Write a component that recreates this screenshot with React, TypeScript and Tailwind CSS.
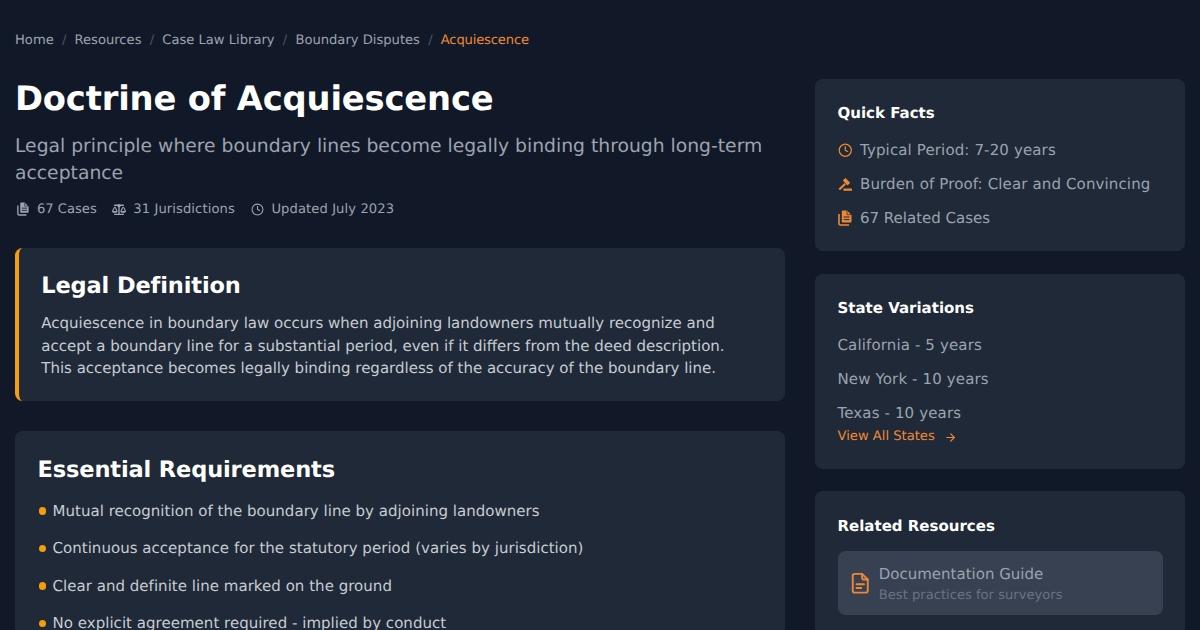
import { LuClock, LuArrowRight } from 'react-icons/lu';
import { FaBalanceScale } from 'react-icons/fa';

const crumbs = ['Home', 'Resources', 'Case Law Library', 'Boundary Disputes'];

const requirements = [
  'Mutual recognition of the boundary line by adjoining landowners',
  'Continuous acceptance for the statutory period (varies by jurisdiction)',
  'Clear and definite line marked on the ground',
  'No explicit agreement required - implied by conduct',
];

const states = ['California - 5 years', 'New York - 10 years', 'Texas - 10 years'];

// stacked sheets, solid front page with two cut-out lines
function CasesIcon({ className, cut }: { className?: string; cut: string }) {
  return (
    <svg viewBox="0 0 14 16" className={className} fill="none">
      <path d="M1 4.5V13.5a1.5 1.5 0 0 0 1.5 1.5H10.5" stroke="currentColor" strokeWidth="1.6" strokeLinecap="round" />
      <path d="M4.8 0.5H9L13.5 5V11.5a1 1 0 0 1-1 1H4.8a1 1 0 0 1-1-1V1.5a1 1 0 0 1 1-1Z" fill="currentColor" />
      <path d="M5.6 7H11.6M5.6 9.6H11.6" stroke={cut} strokeWidth="1" />
      <path d="M9 0.8V4.6H13.2" stroke={cut} strokeWidth="0.7" />
    </svg>
  );
}

function GavelIcon({ className }: { className?: string }) {
  return (
    <svg viewBox="0 0 14 13" className={className} fill="currentColor">
      <path d="M7.4 0 12.2 4.8 9.6 7.4 4.8 2.6Z" />
      <path d="M6.6 5 8 6.4 1.9 12.2 0.5 10.8Z" />
      <rect x="5.4" y="10.6" width="8.6" height="2.2" rx="0.6" />
    </svg>
  );
}

function DocIcon({ className }: { className?: string }) {
  return (
    <svg viewBox="0 0 24 24" className={className} fill="none" stroke="currentColor" strokeWidth="2" strokeLinecap="round" strokeLinejoin="round">
      <path d="M14 2H6a2 2 0 0 0-2 2v16a2 2 0 0 0 2 2h12a2 2 0 0 0 2-2V8Z" />
      <path d="M14 2v4a2 2 0 0 0 2 2h4" />
      <path d="M8 13h8M8 17h5" />
    </svg>
  );
}

export default function App() {
  return (
    <div className="h-[630px] overflow-hidden bg-[#111827] px-[15px] pt-[32px] font-['DejaVu_Sans',sans-serif] [text-rendering:geometricPrecision]">
      {/* Breadcrumb */}
      <nav className="flex items-center text-[13.125px] leading-[18.75px] text-[#9ca3af]">
        {crumbs.map(c => (
          <span key={c} className="flex items-center">
            <span>{c}</span>
            <span className="mx-[8.2px] text-[#4b5563]">/</span>
          </span>
        ))}
        <span className="tracking-[-0.15px] text-[#ed8936]">Acquiescence</span>
      </nav>

      <div className="mt-[28px] flex gap-[30px]">
        {/* Main column */}
        <div className="w-[770px] shrink-0 pt-[1.5px]">
          <h1 className="text-[33.75px] leading-[37.5px] font-bold tracking-[-0.17px] text-white">Doctrine of Acquiescence</h1>
          <p className="mt-[16.5px] text-[18.75px] leading-[26.25px] text-[#9ca3af]">
            Legal principle where boundary lines become legally binding through long-term acceptance
          </p>
          <div className="mt-[14px] flex items-center gap-[15px] text-[13.125px] leading-[18.75px] text-[#9ca3af]">
            <span className="flex items-center gap-[7px]">
              <span className="-mt-[2px] flex w-[15px] justify-center"><CasesIcon cut="#111827" className="h-[14px] w-[12px]" /></span>67 Cases
            </span>
            <span className="flex items-center gap-[6.5px] tracking-[0.1px]">
              <span className="-mt-[1px] flex w-[15px] justify-center"><FaBalanceScale className="h-[13px] w-[14px]" /></span>31 Jurisdictions
            </span>
            <span className="flex items-center gap-[6.5px] tracking-[0.1px]">
              <span className="-mt-[1px] flex w-[15px] justify-center"><LuClock className="h-[13px] w-[13px]" /></span>Updated July 2023
            </span>
          </div>

          <section className="mt-[28px] rounded-[7.5px] border-l-4 border-[#f59e0b] bg-[#1f2937] pt-[23.5px] pr-[30px] pb-[21.5px] pl-[22.25px]">
            <h2 className="text-[22.5px] leading-[30px] font-bold tracking-[-0.13px] text-white">Legal Definition</h2>
            <p className="mt-[11.25px] text-[15px] leading-[22.5px] text-[#c8ccd3]">
              Acquiescence in boundary law occurs when adjoining landowners mutually recognize and accept a boundary line for a substantial period, even if it differs from the deed description. This acceptance becomes legally binding regardless of the accuracy of the boundary line.
            </p>
          </section>

          <section className="mt-[30px] rounded-[7.5px] bg-[#1f2937] px-[22.5px] pt-[23.5px] pb-[21.5px]">
            <h2 className="text-[22.5px] leading-[30px] font-bold tracking-[-0.13px] text-white">Essential Requirements</h2>
            <ul className="mt-[15px] flex flex-col gap-[15px] text-[15px] leading-[22.5px] tracking-[0.03px] text-[#c8ccd3]">
              {requirements.map(r => (
                <li key={r} className="flex items-center gap-[6.5px]">
                  <span className="ml-[1px] h-[7.5px] w-[7.5px] rounded-full bg-[#f59e0b]" />
                  {r}
                </li>
              ))}
            </ul>
          </section>
        </div>

        {/* Sidebar */}
        <aside className="flex w-[370px] shrink-0 flex-col gap-[22.5px]">
          <section className="rounded-[7.5px] bg-[#1f2937] px-[22.5px] pt-[23.5px] pb-[22px]">
            <h3 className="text-[15px] leading-[22.5px] font-bold text-white">Quick Facts</h3>
            <div className="mt-[14px] flex flex-col gap-[11.5px] text-[15px] leading-[22.5px] tracking-[0.13px] text-[#9ca3af]">
              <div className="flex items-center gap-[7.5px]">
                <span className="flex w-[15px] justify-center"><LuClock className="h-[14.5px] w-[14.5px] text-[#ed8936]" /></span>Typical Period: 7-20 years
              </div>
              <div className="flex items-center gap-[7.5px]">
                <span className="flex w-[15px] justify-center"><GavelIcon className="h-[13px] w-[14px] text-[#ed8936]" /></span>Burden of Proof: Clear and Convincing
              </div>
              <div className="flex items-center gap-[7.5px]">
                <span className="flex w-[15px] justify-center"><CasesIcon cut="#1f2937" className="h-[16px] w-[14px] text-[#ed8936]" /></span>
                <span className="tracking-normal">67 Related Cases</span>
              </div>
            </div>
          </section>

          <section className="rounded-[7.5px] bg-[#1f2937] px-[22.5px] pt-[23.5px] pb-[22px]">
            <h3 className="text-[15px] leading-[22.5px] font-bold text-white">State Variations</h3>
            <div className="mt-[14px] flex flex-col gap-[11.5px] text-[15px] leading-[22.5px] tracking-[0.13px] text-[#9ca3af]">
              {states.map(s => <div key={s}>{s}</div>)}
            </div>
            <a className="mt-[3.5px] flex items-center gap-[9px] text-[13.125px] leading-[18.75px] text-[#ed8936]">
              View All States <LuArrowRight className="h-[13px] w-[13px]" />
            </a>
          </section>

          <section className="rounded-[7.5px] bg-[#1f2937] px-[22.5px] pt-[23.5px] pb-[21.5px]">
            <h3 className="text-[15px] leading-[22.5px] font-bold text-white">Related Resources</h3>
            <div className="mt-[14px] flex h-[63.75px] items-center gap-[7.5px] rounded-[7.5px] bg-[#374151] px-[11.25px]">
              <DocIcon className="h-[22.5px] w-[22.5px] text-[#ed8936]" />
              <div className="pt-[2.5px]">
                <div className="text-[15px] leading-[22.5px] text-[#9ca3af]">Documentation Guide</div>
                <div className="mt-[1px] text-[13.125px] leading-[18.75px] text-[#6b7280]">Best practices for surveyors</div>
              </div>
            </div>
          </section>
        </aside>
      </div>
    </div>
  );
}
